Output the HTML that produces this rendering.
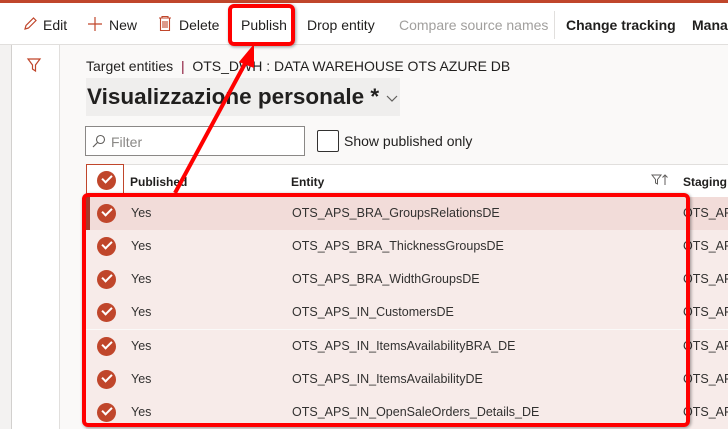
<!DOCTYPE html>
<html><head><meta charset="utf-8"><style>
body{margin:0;width:728px;height:429px;overflow:hidden;background:#faf9f8;font-family:"Liberation Sans",sans-serif;position:relative;color:#201f1e}
.a{position:absolute;white-space:nowrap}
.tb{font-size:14px;top:17px}
.row{position:absolute;left:86px;width:642px;height:33px;background:#f7ebe9}
.row .c{position:absolute;left:11px;top:7px;width:19px;height:19px;border-radius:50%;background:#c0462b}
.row .c:after{content:"";position:absolute;left:5px;top:4px;width:8px;height:4px;border-left:2px solid #fff;border-bottom:2px solid #fff;transform:rotate(-45deg)}
.row span{position:absolute;top:9px;font-size:12.5px;color:#323130}
</style></head><body>
<div class="a" style="left:0;top:0;width:728px;height:3px;background:#c0462b"></div>
<div class="a" style="left:0;top:3px;width:728px;height:41px;background:#fff;border-bottom:1px solid #e1dfdd"></div>
<div class="a" style="left:0;top:45px;width:11px;height:384px;background:#f3f2f1;border-right:1px solid #d2d0ce"></div>
<div class="a" style="left:12px;top:45px;width:47px;height:384px;background:#fff;border-right:1px solid #e1dfdd"></div>
<svg class="a" style="left:26px;top:57px" width="16" height="16"><path d="M2 2H14L9.5 8V14L6.5 12V8Z" fill="none" stroke="#c0462b" stroke-width="1.2"/></svg>
<svg class="a" style="left:22px;top:16px" width="16" height="16"><path d="M3 13L4 9.5L11.5 2L14 4.5L6.5 12Z M3 13L6.5 12" fill="none" stroke="#c0462b" stroke-width="1.2"/></svg>
<div class="a tb" style="left:43px">Edit</div>
<svg class="a" style="left:87px;top:16px" width="16" height="16"><path d="M8 1V15M1 8H15" stroke="#c0462b" stroke-width="1.2"/></svg>
<div class="a tb" style="left:109px">New</div>
<svg class="a" style="left:157px;top:15px" width="16" height="17"><path d="M2 3H14M5 3V1.5H11V3M3.5 3V15.5H12.5V3M6 6V13M8 6V13M10 6V13" fill="none" stroke="#c0462b" stroke-width="1.1"/></svg>
<div class="a tb" style="left:179px">Delete</div>
<div class="a tb" style="left:241px">Publish</div>
<div class="a tb" style="left:307px">Drop entity</div>
<div class="a tb" style="left:399px;color:#a19f9d">Compare source names</div>
<div class="a" style="left:554px;top:11px;width:1px;height:28px;background:#e1dfdd"></div>
<div class="a tb" style="left:566px;font-weight:bold">Change tracking</div>
<div class="a tb" style="left:692px;font-weight:bold">Mana</div>
<div class="a" style="left:86px;top:58px;font-size:14px">Target entities &nbsp;<span style="color:#8a1538">|</span>&nbsp; OTS_DWH : DATA WAREHOUSE OTS AZURE DB</div>
<div class="a" style="left:86px;top:78px;width:314px;height:38px;background:#efeeed"></div>
<div class="a" style="left:87px;top:84px;font-size:22.5px;font-weight:bold;color:#201f1e">Visualizzazione personale *</div>
<svg class="a" style="left:386px;top:95px" width="12" height="8"><path d="M1 1L6 6L11 1" fill="none" stroke="#605e5c" stroke-width="1.2"/></svg>
<div class="a" style="left:85px;top:126px;width:218px;height:28px;background:#fff;border:1px solid #8a8886"></div>
<svg class="a" style="left:92px;top:134px" width="14" height="14"><circle cx="8.5" cy="5.5" r="4" fill="none" stroke="#605e5c" stroke-width="1.1"/><path d="M5.5 8.5L1 13" stroke="#605e5c" stroke-width="1.2"/></svg>
<div class="a" style="left:111px;top:134px;font-size:14px;color:#8a8886">Filter</div>
<div class="a" style="left:317px;top:130px;width:20px;height:20px;background:#fff;border:1px solid #323130;border-radius:2px"></div>
<div class="a" style="left:344px;top:133px;font-size:14px">Show published only</div>
<div class="a" style="left:86px;top:164px;width:642px;height:33px;background:#fff;border-top:1px solid #e1dfdd"></div>
<div class="a" style="left:86px;top:164px;width:38px;height:33px;border:1px solid #c0462b;box-sizing:border-box"></div>
<div class="row" style="top:164px;background:transparent"><div class="c"></div></div>
<div class="a" style="left:130px;top:175px;font-size:12px;font-weight:bold">Published</div>
<div class="a" style="left:291px;top:175px;font-size:12px;font-weight:bold">Entity</div>
<svg class="a" style="left:651px;top:174px" width="18" height="12"><path d="M1 1H10L6.5 5.5V10L4.5 9V5.5Z" fill="none" stroke="#605e5c"/><path d="M14 11V1M11.5 3.5L14 1L16.5 3.5" fill="none" stroke="#605e5c"/></svg>
<div class="a" style="left:683px;top:175px;font-size:12px;font-weight:bold">Staging</div>
<div class="row" style="top:197px;background:#f2dcd9"><div style="position:absolute;left:0;top:0;width:4px;height:33px;background:#a4372a"></div><div class="c"></div><span style="left:45px">Yes</span><span style="left:206px">OTS_APS_BRA_GroupsRelationsDE</span><span style="left:597px">OTS_AP</span></div>
<div class="row" style="top:230px"><div class="c"></div><span style="left:45px">Yes</span><span style="left:206px">OTS_APS_BRA_ThicknessGroupsDE</span><span style="left:597px">OTS_AP</span></div>
<div class="row" style="top:263px"><div class="c"></div><span style="left:45px">Yes</span><span style="left:206px">OTS_APS_BRA_WidthGroupsDE</span><span style="left:597px">OTS_AP</span></div>
<div class="row" style="top:296px"><div class="c"></div><span style="left:45px">Yes</span><span style="left:206px">OTS_APS_IN_CustomersDE</span><span style="left:597px">OTS_AP</span></div>
<div class="row" style="top:330px"><div class="c"></div><span style="left:45px">Yes</span><span style="left:206px">OTS_APS_IN_ItemsAvailabilityBRA_DE</span><span style="left:597px">OTS_AP</span></div>
<div class="row" style="top:363px"><div class="c"></div><span style="left:45px">Yes</span><span style="left:206px">OTS_APS_IN_ItemsAvailabilityDE</span><span style="left:597px">OTS_AP</span></div>
<div class="row" style="top:396px"><div class="c"></div><span style="left:45px">Yes</span><span style="left:206px">OTS_APS_IN_OpenSaleOrders_Details_DE</span><span style="left:597px">OTS_AP</span></div>
<div class="a" style="left:82px;top:193px;width:600px;height:226px;border:4px solid #f00;border-radius:6px;box-shadow:1px 1px 3px rgba(0,0,0,.4)"></div>
<div class="a" style="left:228px;top:4px;width:59px;height:34px;border:4px solid #f00;border-radius:6px;box-shadow:1px 1px 3px rgba(0,0,0,.4)"></div>
<svg class="a" style="left:0;top:0" width="728" height="429"><path d="M175 193L247 60" stroke="#f00" stroke-width="4"/><path d="M254 44L239 62L254 68Z" fill="#f00"/></svg>
</body></html>
